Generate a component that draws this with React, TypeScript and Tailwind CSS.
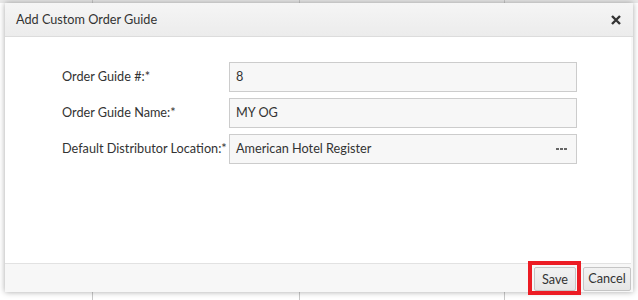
import React from "react";

const font = { fontFamily: 'Lato, "Open Sans", sans-serif' };

function Field({ label, value, more }: { label: string; value: string; more?: boolean }): React.ReactElement {
  return (
    <div className="flex items-center">
      <label className="w-[167px] shrink-0 whitespace-nowrap text-[12.7px] text-[#333]">{label}</label>
      <div className="flex h-[30px] w-[348px] shrink-0 items-center justify-between border border-[#cccccc] bg-[#f7f7f7] pl-[6px] pr-[9px] text-[12.7px] text-[#333]">
        <span>{value}</span>
        {more && (
          <span className="flex gap-[1px]">
            <span className="h-[2px] w-[3px] bg-[#666]" />
            <span className="h-[2px] w-[3px] bg-[#666]" />
            <span className="h-[2px] w-[3px] bg-[#666]" />
          </span>
        )}
      </div>
    </div>
  );
}

export default function App(): React.ReactElement {
  return (
    <div className="relative h-[300px] w-[638px] overflow-hidden bg-white" style={font}>
      {/* grid behind the modal */}
      <div className="flex flex-col">
        <div className="grid h-[3px] grid-cols-[93px_207px_205px_1fr] bg-[#e9e9e9]">
          <div className="border-r border-[#c8c8c8]" />
          <div className="border-r border-[#c8c8c8]" />
          <div className="border-r border-[#c8c8c8]" />
          <div />
        </div>
        <div className="h-[289px]" />
        <div className="grid h-[8px] grid-cols-[93px_207px_205px_1fr] overflow-hidden bg-white text-[12.7px] leading-[20px] text-[#333]">
          <div className="border-r border-[#c8c8c8]" />
          <div className="border-r border-[#c8c8c8] pl-[12px] pt-[4px]">11/2019</div>
          <div className="border-r border-[#c8c8c8] pl-[10px] pt-[4px]">Mike Mcallister</div>
          <div className="pl-[10px] pt-[4px]">Emma Ted</div>
        </div>
      </div>

      {/* modal */}
      <div className="absolute left-[5px] top-[3px] flex h-[289px] w-[628px] flex-col bg-[#f7f7f7] shadow-[0_0_6px_rgba(0,0,0,0.35)]">
        <div className="flex h-[34px] items-center justify-between border-b border-[#dcdcdc] bg-gradient-to-b from-[#f5f5f5] to-[#ececec] pl-[11px] pr-[12px]">
          <span className="text-[12.7px] text-[#333]">Add Custom Order Guide</span>
          <svg width="10" height="10" viewBox="0 0 10 10">
            <path d="M1 1L9 9M9 1L1 9" stroke="#333" strokeWidth="2.4" />
          </svg>
        </div>
        <div className="mr-[2px] flex h-[227px] flex-col gap-[6px] border-b border-[#e2e2e2] bg-white pl-[57px] pt-[25px]">
          <Field label="Order Guide #:*" value="8" />
          <Field label="Order Guide Name:*" value="MY OG" />
          <Field label="Default Distributor Location:*" value="American Hotel Register" more />
        </div>
        <div className="flex flex-1 items-center justify-end gap-[7px] pr-[2px] pt-[1px]">
          <div className="relative">
            <button className="h-[24px] w-[42px] rounded-[2px] border border-[#c5c5c5] bg-gradient-to-b from-[#f2f2f2] to-[#e6e6e6] text-[12.7px] text-[#333]">
              Save
            </button>
            <div className="pointer-events-none absolute -left-[6px] -top-[5px] h-[34px] w-[53px] border-[4px] border-[#ec1c24]" />
          </div>
          <button className="h-[24px] w-[48px] rounded-[2px] border border-[#c5c5c5] bg-gradient-to-b from-[#f2f2f2] to-[#e6e6e6] text-[12.7px] text-[#333]">
            Cancel
          </button>
        </div>
      </div>
    </div>
  );
}
